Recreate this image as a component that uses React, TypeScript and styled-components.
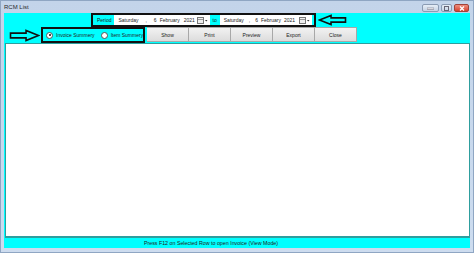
import React from "react";
import styled, { createGlobalStyle } from "styled-components";

const GlobalStyle = createGlobalStyle`
  html, body {
    margin: 0;
    padding: 0;
    background: #c6d6eb;
  }
  body {
    font-family: "Liberation Sans", Arial, sans-serif;
  }
`;

const Window = styled.div`
  width: 474px;
  height: 253px;
  display: flex;
  flex-direction: column;
  background: linear-gradient(#c3d4ea, #cddcef);
  box-sizing: border-box;
  border: 1px solid #8fa6c3;
`;

const TitleBar = styled.div`
  height: 12px;
  display: flex;
  align-items: center;
  padding: 0 4px 0 3px;
`;

const Title = styled.span`
  font-size: 6px;
  color: #2a2a2a;
  flex: 1;
`;

const Controls = styled.div`
  display: flex;
  align-items: center;
  gap: 2px;
  margin-top: 2px;
`;

const CtrlButton = styled.div<{ $w: number; $close?: boolean }>`
  width: ${(p) => p.$w}px;
  height: 8px;
  border: 1px solid ${(p) => (p.$close ? "#a0433a" : "#8a9bb3")};
  border-radius: 2px;
  background: ${(p) =>
    p.$close
      ? "linear-gradient(#ee8f80, #d6412f)"
      : "linear-gradient(#e6edf6, #c4d2e4)"};
  display: flex;
  align-items: center;
  justify-content: center;
  box-sizing: border-box;
`;

const Client = styled.div`
  flex: 1;
  margin: 0 3px 4px 3px;
  background: #00ffff;
  display: flex;
  flex-direction: column;
`;

const TopRow = styled.div`
  height: 14px;
  display: flex;
  align-items: center;
  padding-left: 87px;
`;

const PeriodBox = styled.div`
  height: 14px;
  width: 225px;
  box-sizing: border-box;
  border: 2px solid #111;
  display: flex;
  align-items: center;
  padding: 0 2px;
  gap: 1px;
`;

const Label = styled.span`
  font-size: 5px;
  color: #222;
  padding: 0 2px 0 2px;
`;

const DateBox = styled.div<{ $w: number }>`
  width: ${(p) => p.$w}px;
  height: 10px;
  background: #fff;
  display: flex;
  align-items: center;
  font-size: 5px;
  color: #222;
  padding: 0 2px 0 4px;
  box-sizing: border-box;
  white-space: nowrap;
`;

const DateText = styled.span`
  flex: 1;
  display: flex;
`;

const Part = styled.span<{ $ml: number }>`
  margin-left: ${(p) => p.$ml}px;
`;

const ButtonRow = styled.div`
  height: 16px;
  display: flex;
  align-items: stretch;
  padding-left: 5px;
`;

const ArrowSlot = styled.div`
  width: 32px;
  display: flex;
  align-items: center;
`;

const RadioBox = styled.div`
  width: 104px;
  box-sizing: border-box;
  border: 2px solid #111;
  display: flex;
  align-items: center;
  padding-left: 3px;
  gap: 6px;
  font-size: 5px;
  color: #222;
  white-space: nowrap;
`;

const RadioItem = styled.label`
  display: flex;
  align-items: center;
  gap: 3px;
`;

const RadioDot = styled.span<{ $on?: boolean }>`
  width: 7px;
  height: 7px;
  border-radius: 50%;
  background: #fff;
  border: 1px solid #555;
  box-sizing: border-box;
  position: relative;
  &::after {
    content: "";
    display: ${(p) => (p.$on ? "block" : "none")};
    position: absolute;
    left: 1.5px;
    top: 1.5px;
    width: 2px;
    height: 2px;
    border-radius: 50%;
    background: #111;
  }
`;

const ActionButton = styled.div`
  width: 42px;
  box-sizing: border-box;
  margin: 0 0 1px 0;
  background: linear-gradient(#f2f2f2, #dcdcdc);
  border: 1px solid #a8a8a8;
  border-left-width: 0;
  display: flex;
  align-items: center;
  justify-content: center;
  font-size: 5px;
  color: #222;
  &:first-of-type {
    border-left-width: 1px;
  }
`;

const Grid = styled.div`
  flex: 1;
  margin: 0 0 0 1px;
  background: #fff;
  border: 1px solid #2e9e9e;
  border-width: 1px 1px 2px 1px;
`;

const Status = styled.div`
  height: 10px;
  display: flex;
  align-items: center;
  justify-content: center;
  font-size: 5.3px;
  color: #222;
  padding-right: 52px;
`;

const Gap = styled.div<{ $w: number }>`
  width: ${(p) => p.$w}px;
`;

function CalendarIcon() {
  return (
    <svg width="11" height="7" viewBox="0 0 11 7">
      <rect x="0.5" y="0.5" width="6" height="6" fill="#eee" stroke="#777" />
      <line x1="1" y1="2.5" x2="6" y2="2.5" stroke="#999" />
      <path d="M8 3 L10.5 3 L9.25 4.5 Z" fill="#333" />
    </svg>
  );
}

function BlockArrow({ dir, w, h }: { dir: "left" | "right"; w: number; h: number }) {
  const path =
    "M1.5 " + h * 0.32 + " L" + w * 0.55 + " " + h * 0.32 + " L" + w * 0.55 + " 1.5 L" +
    (w - 1.5) + " " + h / 2 + " L" + w * 0.55 + " " + (h - 1.5) + " L" + w * 0.55 + " " +
    h * 0.68 + " L1.5 " + h * 0.68 + " Z";
  return (
    <svg
      width={w}
      height={h}
      viewBox={`0 0 ${w} ${h}`}
      style={dir === "left" ? { transform: "scaleX(-1)" } : undefined}
    >
      <path d={path} fill="#00ffff" stroke="#111" strokeWidth="1.6" strokeLinejoin="miter" />
    </svg>
  );
}

function DatePicker({ w, tight }: { w: number; tight?: boolean }) {
  const g = tight ? 5 : 7;
  return (
    <DateBox $w={w}>
      <DateText>
        <Part $ml={0}>Saturday</Part>
        <Part $ml={g}>,</Part>
        <Part $ml={g}>6</Part>
        <Part $ml={3}>February</Part>
        <Part $ml={tight ? 3 : 4}>2021</Part>
      </DateText>
      <CalendarIcon />
    </DateBox>
  );
}

const buttons = ["Show", "Print", "Preview", "Export", "Close"];

export default function App() {
  return (
    <>
      <GlobalStyle />
      <Window>
        <TitleBar>
          <Title>RCM List</Title>
          <Controls>
            <CtrlButton $w={17}>
              <svg width="7" height="3"><rect x="0" y="1" width="7" height="1.5" fill="#fff" stroke="#667" strokeWidth="0.5" /></svg>
            </CtrlButton>
            <CtrlButton $w={11}>
              <svg width="5" height="5"><rect x="0.5" y="0.5" width="4" height="4" fill="none" stroke="#667" /></svg>
            </CtrlButton>
            <CtrlButton $w={15} $close>
              <svg width="6" height="5"><path d="M1 0.5 L5 4.5 M5 0.5 L1 4.5" stroke="#fff" strokeWidth="1.3" /></svg>
            </CtrlButton>
          </Controls>
        </TitleBar>
        <Client>
          <TopRow>
            <PeriodBox>
              <Label>Period</Label>
              <DatePicker w={97} />
              <Label>to</Label>
              <DatePicker w={94} tight />
            </PeriodBox>
            <Gap $w={2} />
            <BlockArrow dir="left" w={29} h={12} />
          </TopRow>
          <ButtonRow>
            <ArrowSlot>
              <BlockArrow dir="right" w={31} h={13} />
            </ArrowSlot>
            <RadioBox>
              <RadioItem>
                <RadioDot $on />
                Invoice Summery
              </RadioItem>
              <RadioItem>
                <RadioDot />
                Item Summery
              </RadioItem>
            </RadioBox>
            <Gap $w={2} />
            {buttons.map((b) => (
              <ActionButton key={b}>{b}</ActionButton>
            ))}
          </ButtonRow>
          <Grid />
          <Status>Press F12 on Selected Row to open Invoice (View Mode)</Status>
        </Client>
      </Window>
    </>
  );
}
